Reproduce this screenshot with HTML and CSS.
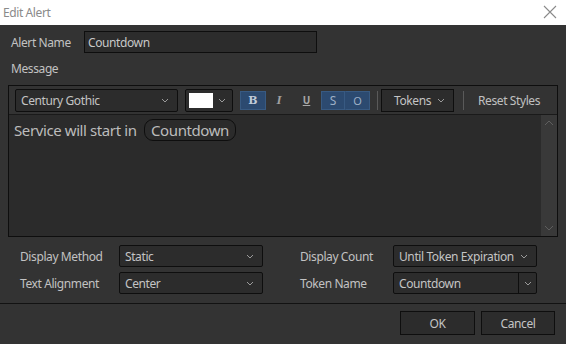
FILE: index.html
```html
<!DOCTYPE html>
<html>
<head>
<meta charset="utf-8">
<link rel="stylesheet" href="styles.css">
</head>
<body>
<div class="window">
  <div class="titlebar">
    <span class="title">Edit Alert</span>
    <svg class="close" width="14" height="14" viewBox="0 0 14 14"><path d="M1 1L13 13M13 1L1 13" stroke="#8a8a8a" stroke-width="1.1" fill="none"/></svg>
  </div>
  <div class="body">
    <div class="name-row">
      <span class="label name-label">Alert Name</span>
      <div class="input name-input">Countdown</div>
    </div>
    <div class="label msg-label">Message</div>
    <div class="editor">
      <div class="toolbar">
        <div class="dd font-dd"><span>Century Gothic</span><svg class="chev" width="8" height="5" viewBox="0 0 8 5"><path d="M1 1L4 4L7 1" stroke="#9a9a9a" fill="none"/></svg></div>
        <div class="dd color-dd"><span class="swatch"></span><svg class="chev" width="8" height="5" viewBox="0 0 8 5"><path d="M1 1L4 4L7 1" stroke="#9a9a9a" fill="none"/></svg></div>
        <div class="fmt">
          <span class="fbtn on b">B</span>
          <span class="fbtn i">I</span>
          <span class="fbtn u">U</span>
          <span class="fbtn on s">S</span>
          <span class="fbtn on o">O</span>
        </div>
        <span class="vsep sep1"></span>
        <div class="dd tokens-dd"><span>Tokens</span><svg class="chev" width="8" height="5" viewBox="0 0 8 5"><path d="M1 1L4 4L7 1" stroke="#9a9a9a" fill="none"/></svg></div>
        <span class="vsep sep2"></span>
        <span class="reset">Reset Styles</span>
      </div>
      <div class="content">
        <div class="text">Service will start in <span class="pill">Countdown</span></div>
        <div class="scrollbar">
          <svg width="10" height="6" viewBox="0 0 10 6"><path d="M1 5L5 1L9 5" stroke="#5e5e5e" fill="none"/></svg>
          <svg width="10" height="6" viewBox="0 0 10 6"><path d="M1 1L5 5L9 1" stroke="#5e5e5e" fill="none"/></svg>
        </div>
      </div>
    </div>
    <div class="fields">
      <span class="label">Display Method</span>
      <div class="dd field-dd"><span>Static</span><svg class="chev" width="8" height="5" viewBox="0 0 8 5"><path d="M1 1L4 4L7 1" stroke="#9a9a9a" fill="none"/></svg></div>
      <span class="label">Display Count</span>
      <div class="dd field-dd"><span>Until Token Expiration</span><svg class="chev" width="8" height="5" viewBox="0 0 8 5"><path d="M1 1L4 4L7 1" stroke="#9a9a9a" fill="none"/></svg></div>
      <span class="label">Text Alignment</span>
      <div class="dd field-dd"><span>Center</span><svg class="chev" width="8" height="5" viewBox="0 0 8 5"><path d="M1 1L4 4L7 1" stroke="#9a9a9a" fill="none"/></svg></div>
      <span class="label">Token Name</span>
      <div class="dd field-dd combo"><span class="combo-text">Countdown</span><span class="combo-btn"><svg class="chev" width="8" height="5" viewBox="0 0 8 5"><path d="M1 1L4 4L7 1" stroke="#9a9a9a" fill="none"/></svg></span></div>
    </div>
  </div>
  <div class="footer">
    <span class="btn ok">OK</span>
    <span class="btn cancel">Cancel</span>
  </div>
</div>
</body>
</html>
```
FILE: styles.css
```css
* { box-sizing: border-box; }
html, body { margin: 0; padding: 0; }
body {
  width: 566px;
  height: 344px;
  overflow: hidden;
  font-family: "Noto Sans", "Open Sans", sans-serif;
  font-size: 12px;
  color: #c4c4c4;
  background: #333333;
}
.window { display: flex; flex-direction: column; height: 344px; }
.titlebar {
  height: 25px;
  background: #ffffff;
  display: flex;
  align-items: center;
  justify-content: space-between;
  padding: 0 9px 1px 3px;
}
.title { color: #8a8a8a; font-size: 12px; letter-spacing: -0.4px; }
.body { padding: 6px 8px 0 8px; }
.label { letter-spacing: -0.4px; color: #c2c2c2; }
.name-row { display: flex; align-items: center; height: 22px; }
.name-label { padding-left: 3px; width: 76px; }
.input {
  height: 22px;
  border: 1px solid #0e0e0e;
  background: #2c2c2c;
  color: #c8c8c8;
  display: flex;
  align-items: center;
  padding-left: 3px;
  letter-spacing: -0.4px;
}
.name-input { width: 233px; }
.msg-label { padding-left: 3px; height: 32px; line-height: 32px; }
.editor {
  width: 550px;
  height: 152px;
  border: 1px solid #0e0e0e;
  display: flex;
  flex-direction: column;
}
.toolbar {
  height: 29px;
  border-bottom: 1px solid #1a1a1a;
  display: flex;
  align-items: center;
  padding-left: 6px;
  flex-shrink: 0;
}
.dd {
  height: 23px;
  border: 1px solid #0e0e0e;
  border-radius: 2px;
  background: #2c2c2c;
  display: flex;
  align-items: center;
  justify-content: space-between;
  padding: 0 8px 0 5px;
  letter-spacing: -0.4px;
  color: #c4c4c4;
  white-space: nowrap;
}
.chev { flex-shrink: 0; }
.font-dd { width: 163px; padding-left: 5px; }
.color-dd { width: 48px; margin-left: 7px; padding: 0 6px 0 3px; }
.swatch { width: 24px; height: 15px; background: #ffffff; }
.fmt { display: flex; margin-left: 7px; height: 19px; }
.fbtn {
  height: 19px;
  display: flex;
  align-items: center;
  justify-content: center;
  color: #a8a8a8;
  font-size: 11px;
}
.fbtn.on { background: #2c4a70; border: 1px solid #385a82; color: #9eb0c6; }
.b { width: 26px; font-family: "DejaVu Serif", serif; font-weight: bold; color: #c0cbd8 !important; }
.i { width: 26px; font-family: "Liberation Serif", serif; font-style: italic; font-weight: bold; font-size: 13px; color: #a0a0a0; }
.u { width: 29px; text-decoration: underline; font-weight: bold; font-size: 10px; }
.s { width: 24px; font-size: 12px; }
.o { width: 25px; border-left-color: #2c4a70 !important; font-size: 11px; }
.vsep { width: 1px; height: 19px; background: #5a5a5a; }
.sep1 { margin-left: 7px; }
.tokens-dd { width: 73px; margin-left: 3px; padding: 0 8px 0 12px; border-radius: 0; }
.sep2 { margin-left: 9px; }
.reset { margin-left: 14px; color: #c0c0c0; letter-spacing: -0.4px; }
.content { flex: 1; display: flex; background: #2b2b2b; }
.text {
  flex: 1;
  padding: 4px 0 0 5px;
  font-size: 15px;
  color: #bcbcbc;
  letter-spacing: -0.4px;
  line-height: 22px;
}
.pill {
  display: inline-block;
  border: 1px solid #0e0e0e;
  border-radius: 9px;
  padding: 0 6px;
  line-height: 20px;
  margin-left: 4px;
}
.scrollbar {
  width: 16px;
  background: #393939;
  display: flex;
  flex-direction: column;
  justify-content: space-between;
  align-items: center;
  padding: 5px 0 5px;
}
.fields {
  display: grid;
  grid-template-columns: 99px 144px 37px 93px 144px;
  grid-template-rows: 22px 22px;
  row-gap: 5px;
  align-items: center;
  padding: 8px 0 0 12px;
}
.fields .label:nth-child(3), .fields .label:nth-child(7) { grid-column: 4; }
.field-dd { height: 22px; padding: 0 8px 0 5px; }
.combo { padding: 0; }
.combo-text { padding-left: 5px; }
.combo-btn {
  width: 18px;
  height: 100%;
  border-left: 1px solid #0e0e0e;
  display: flex;
  align-items: center;
  justify-content: center;
}
.footer {
  margin-top: 9px;
  border-top: 1px solid #121212;
  display: flex;
  justify-content: flex-end;
  gap: 6px;
  padding: 7px 11px 0 0;
}
.btn {
  height: 24px;
  border: 1px solid #0e0e0e;
  background: #2c2c2c;
  display: flex;
  align-items: center;
  justify-content: center;
  color: #c4c4c4;
  letter-spacing: -0.4px;
}
.ok { width: 75px; }
.cancel { width: 74px; }
```
